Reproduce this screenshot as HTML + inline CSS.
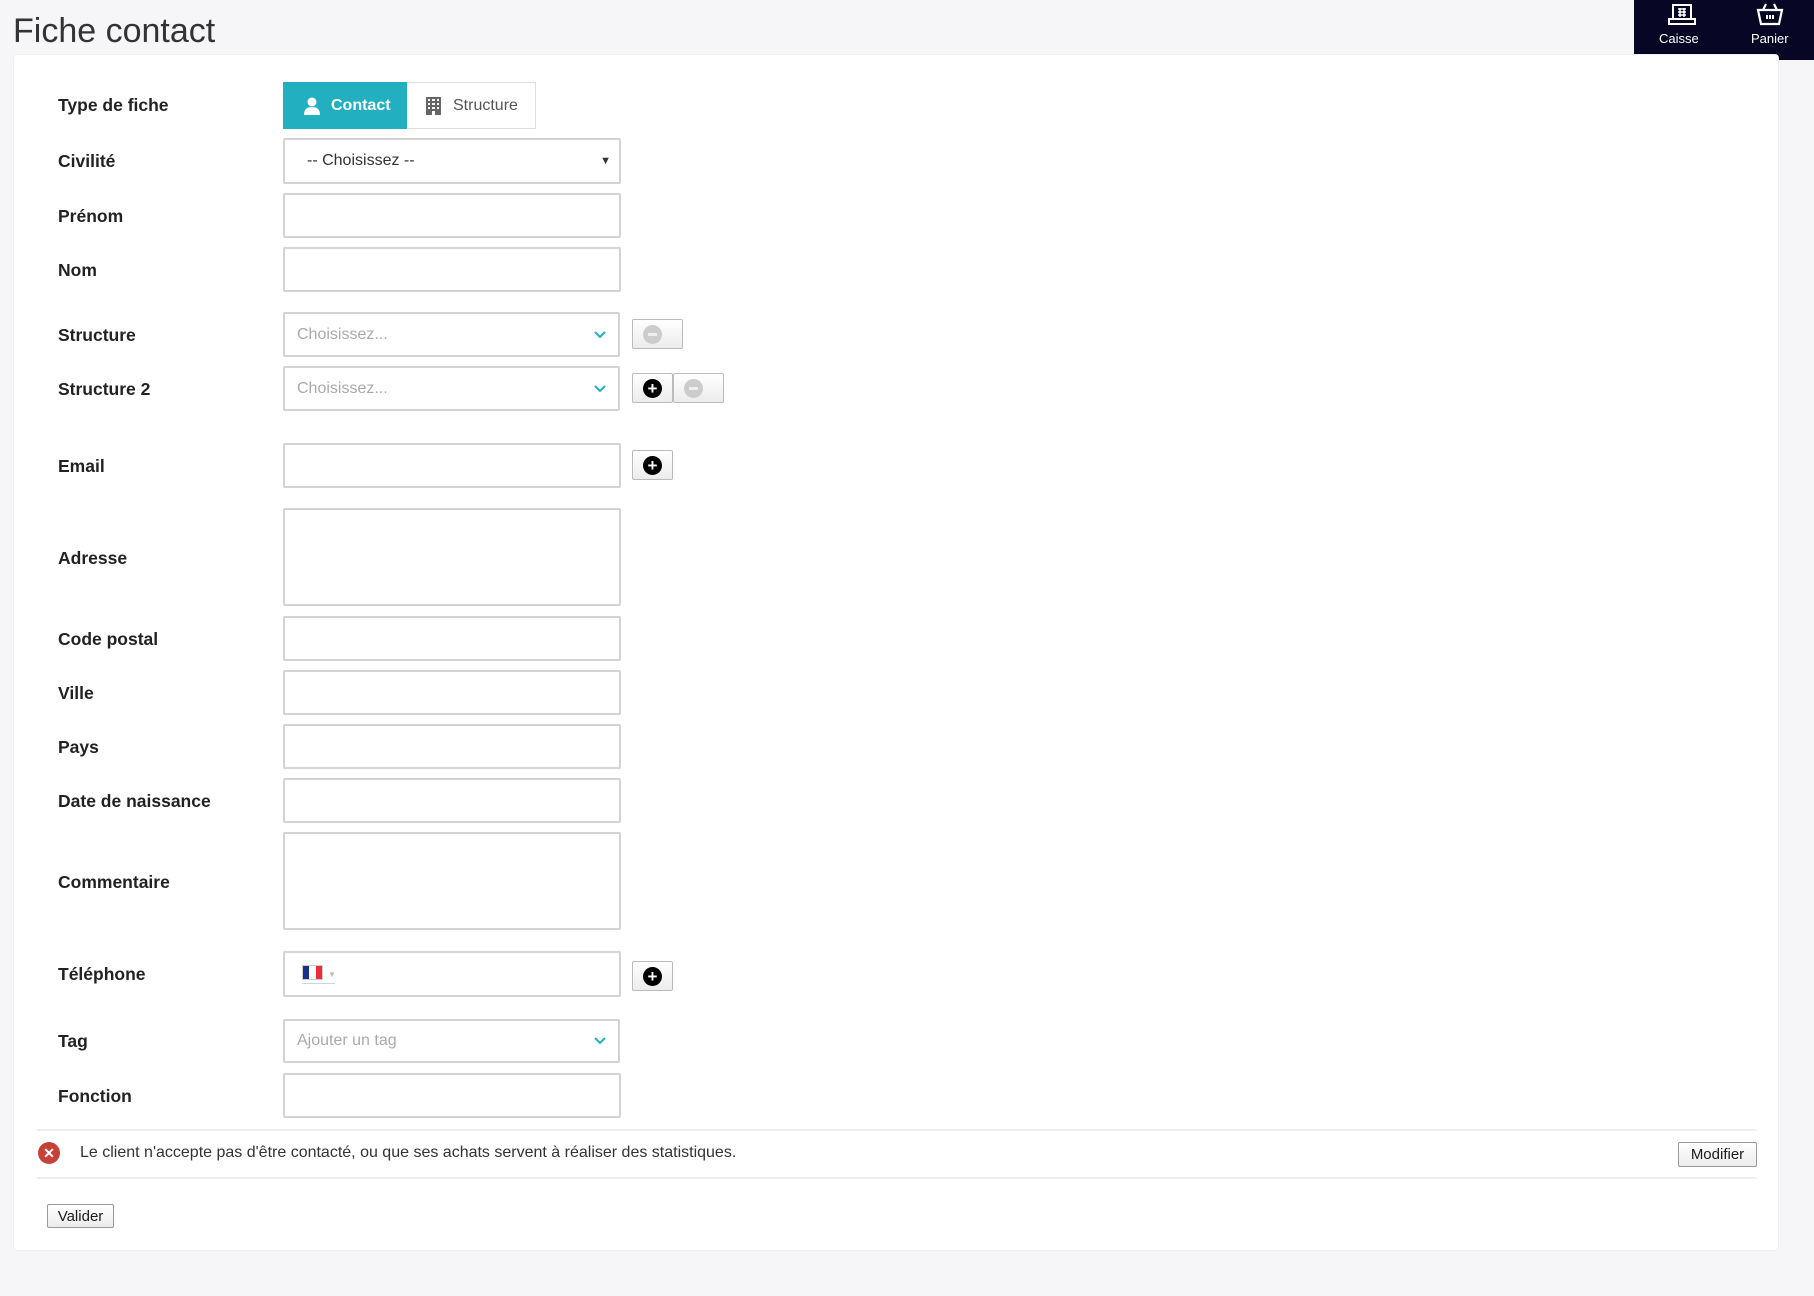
<!DOCTYPE html>
<html><head><meta charset="utf-8"><style>
*{box-sizing:border-box;margin:0;padding:0}
body{width:1814px;height:1296px;background:#f6f5f8;font-family:"Liberation Sans",sans-serif;position:relative;overflow:hidden;color:#1b1b1b}
.a{position:absolute}
h1{position:absolute;left:13px;top:12px;font-size:34px;font-weight:normal;color:#333}
.top{left:1634px;top:0;width:180px;height:60px;background:#070625;color:#fff;font-size:13px}
.card{left:13px;top:54px;width:1766px;height:1197px;background:#fff;border-radius:4px;border:1px solid #efeef2}
.lbl{position:absolute;left:58px;font-size:17.5px;font-weight:bold;color:#222;margin-top:1px}
.in{position:absolute;left:283px;width:338px;border:2px solid #d3d3d3;border-radius:2px;background:#fff}
.sel{color:#aaa;font-size:16px;padding-left:12px;display:flex;align-items:center}
.chev{position:absolute;right:12px;top:50%;margin-top:-6px}
.btn{position:absolute;border:1px solid #bbb;background:linear-gradient(#fff,#ececec);border-radius:2px;display:flex;align-items:center;justify-content:center}
.plus{width:19px;height:19px;border-radius:50%;background:#000;color:#fff;font-weight:bold;font-size:17px;line-height:19px;text-align:center}
.minus{width:19px;height:19px;border-radius:50%;background:#ccc;position:relative}
.minus:after{content:"";position:absolute;left:5px;top:8px;width:9px;height:3px;background:#eee}
.line{position:absolute;left:37px;width:1720px;height:2px;background:#eeeeee}
</style></head><body>
<h1>Fiche contact</h1>
<div class="a top">
  <svg class="a" style="left:34px;top:4px" width="28" height="22" viewBox="0 0 28 22" fill="none" stroke="#fff" stroke-width="2"><rect x="5" y="1" width="18" height="14"/><rect x="1" y="15" width="26" height="5"/><path d="M10 5h8M10 8h8M10 11h8M12 4v9M16 4v9" stroke-width="1.5"/></svg>
  <div class="a" style="left:25px;top:31px">Caisse</div>
  <svg class="a" style="left:122px;top:3px" width="28" height="23" viewBox="0 0 28 23" fill="none" stroke="#fff" stroke-width="2.2"><path d="M2 7h24l-3 14H5z"/><path d="M7 7l3-6M21 7l-3-6"/><path d="M11 12v4M14 12v4M17 12v4" stroke-width="2"/></svg>
  <div class="a" style="left:117px;top:31px">Panier</div>
</div>
<div class="a card"></div>

<div class="lbl" style="top:94px">Type de fiche</div>
<div class="a" style="left:283px;top:82px;width:124px;height:47px;background:#22b0c0;color:#fff;font-weight:bold;font-size:16px;display:flex;align-items:center;padding-left:20px">
<svg width="18" height="18" viewBox="0 0 18 18" fill="#fff"><circle cx="9" cy="5" r="4.5"/><path d="M1 18c0-6 3-8 8-8s8 2 8 8z"/></svg><span style="margin-left:10px">Contact</span></div>
<div class="a" style="left:407px;top:82px;width:129px;height:47px;border:1px solid #ddd;border-left:none;color:#555;font-size:16px;display:flex;align-items:center;padding-left:19px">
<svg width="15" height="18" viewBox="0 0 15 18" fill="#666"><path d="M0 0h15v18H9v-4H6v4H0zM2 2v2h2V2zm4 0v2h3V2zm5 0v2h2V2zM2 6v2h2V6zm4 0v2h3V6zm5 0v2h2V6zM2 10v2h2v-2zm4 0v2h3v-2zm5 0v2h2v-2z"/></svg><span style="margin-left:12px">Structure</span></div>

<div class="lbl" style="top:150px">Civilité</div>
<div class="in sel" style="top:138px;height:46px;color:#333;padding-left:22px">-- Choisissez --<span style="position:absolute;right:8px;font-size:11px;color:#333">▼</span></div>

<div class="lbl" style="top:205px">Prénom</div>
<div class="in" style="top:193px;height:45px"></div>
<div class="lbl" style="top:259px">Nom</div>
<div class="in" style="top:247px;height:45px"></div>

<div class="lbl" style="top:324px">Structure</div>
<div class="in sel" style="top:312px;height:45px;width:337px">Choisissez...<svg class="chev" width="12" height="12" viewBox="0 0 12 12" fill="none" stroke="#22b0c0" stroke-width="2"><path d="M1 3l5 5 5-5"/></svg></div>
<div class="btn" style="left:632px;top:319px;width:51px;height:30px;justify-content:flex-start;padding-left:10px"><div class="minus"></div></div>

<div class="lbl" style="top:378px">Structure 2</div>
<div class="in sel" style="top:366px;height:45px;width:337px">Choisissez...<svg class="chev" width="12" height="12" viewBox="0 0 12 12" fill="none" stroke="#22b0c0" stroke-width="2"><path d="M1 3l5 5 5-5"/></svg></div>
<div class="btn" style="left:632px;top:373px;width:41px;height:30px"><div class="plus">+</div></div>
<div class="btn" style="left:673px;top:373px;width:51px;height:30px;justify-content:flex-start;padding-left:10px"><div class="minus"></div></div>

<div class="lbl" style="top:455px">Email</div>
<div class="in" style="top:443px;height:45px"></div>
<div class="btn" style="left:632px;top:450px;width:41px;height:30px"><div class="plus">+</div></div>

<div class="lbl" style="top:547px">Adresse</div>
<div class="in" style="top:508px;height:98px"></div>
<div class="lbl" style="top:628px">Code postal</div>
<div class="in" style="top:616px;height:45px"></div>
<div class="lbl" style="top:682px">Ville</div>
<div class="in" style="top:670px;height:45px"></div>
<div class="lbl" style="top:736px">Pays</div>
<div class="in" style="top:724px;height:45px"></div>
<div class="lbl" style="top:790px">Date de naissance</div>
<div class="in" style="top:778px;height:45px"></div>
<div class="lbl" style="top:871px">Commentaire</div>
<div class="in" style="top:832px;height:98px"></div>

<div class="lbl" style="top:963px">Téléphone</div>
<div class="in" style="top:951px;height:46px"></div>
<div class="a" style="left:302px;top:965px;width:21px;height:15px;border:1px solid #ccc;display:flex"><div style="flex:1;background:#1c2e8c"></div><div style="flex:1;background:#fff"></div><div style="flex:1;background:#ee2b3a"></div></div>
<div class="a" style="left:328px;top:970px;font-size:8px;color:#bbb">▼</div>
<div class="a" style="left:302px;top:983px;width:33px;height:1px;background:#c6d6e6"></div>
<div class="btn" style="left:632px;top:961px;width:41px;height:30px"><div class="plus">+</div></div>

<div class="lbl" style="top:1030px">Tag</div>
<div class="in sel" style="top:1019px;height:44px;width:337px">Ajouter un tag<svg class="chev" width="12" height="12" viewBox="0 0 12 12" fill="none" stroke="#22b0c0" stroke-width="2"><path d="M1 3l5 5 5-5"/></svg></div>
<div class="lbl" style="top:1085px">Fonction</div>
<div class="in" style="top:1073px;height:45px"></div>

<div class="line" style="top:1129px"></div>
<div class="a" style="left:38px;top:1142px;width:22px;height:22px;border-radius:50%;background:#c9403a;color:#fff;font-weight:bold;font-size:14px;line-height:22px;text-align:center">✕</div>
<div class="a" style="left:80px;top:1144px;font-size:16px;color:#333">Le client n'accepte pas d'être contacté, ou que ses achats servent à réaliser des statistiques.</div>
<div class="btn" style="left:1678px;top:1142px;width:79px;height:25px;border-color:#999;font-size:15px">Modifier</div>
<div class="line" style="top:1177px"></div>
<div class="btn" style="left:47px;top:1204px;width:67px;height:24px;border-color:#999;font-size:15px">Valider</div>
</body></html>
